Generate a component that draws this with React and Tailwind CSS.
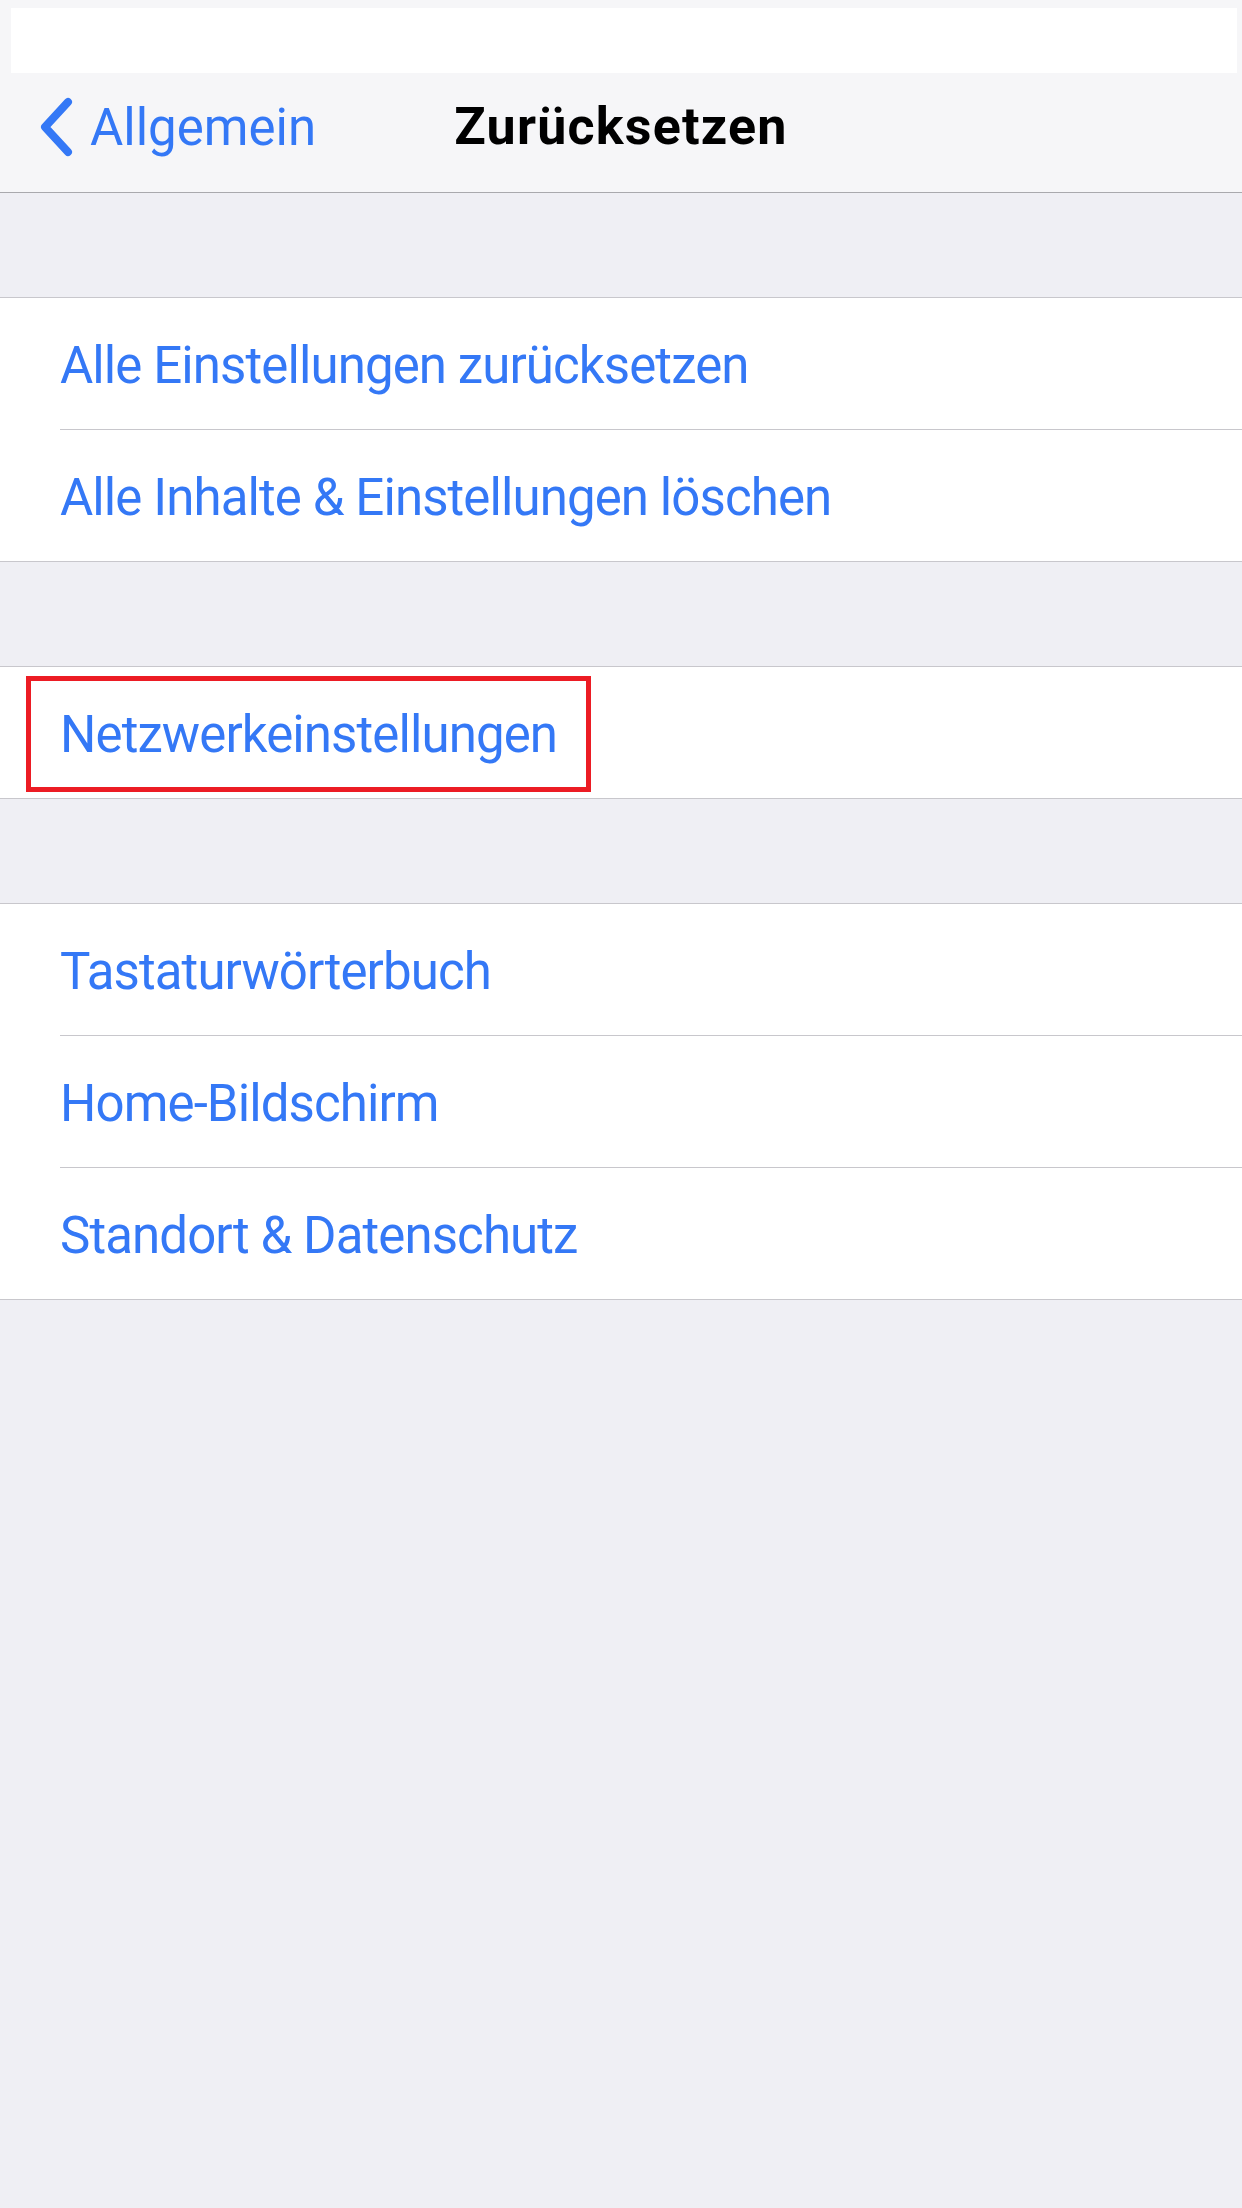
import React from 'react';

const font = { fontFamily: 'Roboto, "Noto Sans", sans-serif' };

const groups = [
  ['Alle Einstellungen zurücksetzen', 'Alle Inhalte & Einstellungen löschen'],
  ['Netzwerkeinstellungen'],
  ['Tastaturwörterbuch', 'Home-Bildschirm', 'Standort & Datenschutz'],
];

const BackChevron = () => (
  <svg width="40" height="60" viewBox="0 0 40 60" className="shrink-0">
    <polyline
      points="32,5 9,30 32,55"
      fill="none"
      stroke="#3478f6"
      strokeWidth="8"
      strokeLinecap="round"
      strokeLinejoin="round"
    />
  </svg>
);

const Row = ({ label, last, highlight }) => (
  <div className="relative">
    <div className="h-[131px] flex items-center pl-[60px] pt-[4px]">
      <span className="text-[51px] text-[#3478f6] leading-none tracking-[-0.9px]">{label}</span>
    </div>
    {highlight && (
      <div className="absolute left-[26px] top-[9px] w-[565px] h-[116px] border-[5px] border-[#ec1c24]" />
    )}
    {!last && <div className="ml-[60px] h-px bg-[#c8c7cc]" />}
  </div>
);

export default function App() {
  return (
    <div className="min-h-[2208px] w-[1242px] bg-[#efeff4]" style={font}>
      <header className="bg-[#f6f6f8] border-b border-[#a9a9ad]">
        <div className="pt-[8px] pl-[11px] pr-[5px]">
          <div className="h-[65px] bg-white" />
        </div>
        <div className="relative h-[119px]">
          <div className="h-[108px] flex items-center pl-[36px]">
            <BackChevron />
            <span className="ml-[14px] text-[51px] text-[#3478f6] leading-none">Allgemein</span>
          </div>
          <div className="absolute inset-x-0 top-0 h-[108px] flex items-center justify-center">
            <span className="text-[52px] font-bold text-black leading-none tracking-[1.2px]">Zurücksetzen</span>
          </div>
        </div>
      </header>

      {groups.map((rows, gi) => (
        <div key={gi} className="pt-[104px]">
          <div className="bg-white border-y border-[#c8c7cc]">
            {rows.map((label, i) => (
              <Row
                key={label}
                label={label}
                last={i === rows.length - 1}
                highlight={label === 'Netzwerkeinstellungen'}
              />
            ))}
          </div>
        </div>
      ))}
    </div>
  );
}
